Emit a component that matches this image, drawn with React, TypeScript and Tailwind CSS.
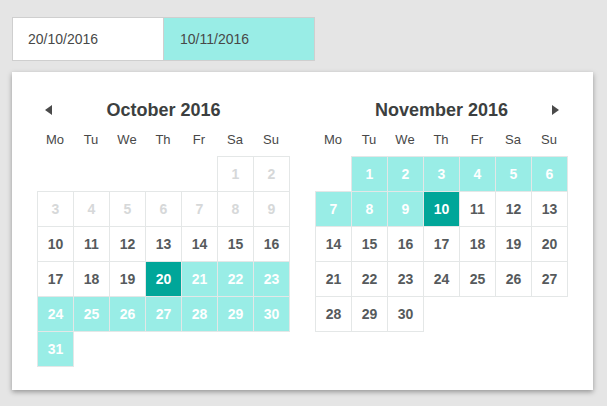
import React from "react";

type DayState = "blocked" | "default" | "span" | "selected";

type Day = {
  label: number;
  state: DayState;
} | null;

type Month = {
  title: string;
  rows: Day[][];
  arrow: "left" | "right";
};

const WEEKDAYS = ["Mo", "Tu", "We", "Th", "Fr", "Sa", "Su"];

function buildMonth(offset: number, length: number, stateOf: (d: number) => DayState): Day[][] {
  const cells: Day[] = [];
  for (let i = 0; i < offset; i++) cells.push(null);
  for (let d = 1; d <= length; d++) cells.push({ label: d, state: stateOf(d) });
  const rows: Day[][] = [];
  for (let i = 0; i < cells.length; i += 7) rows.push(cells.slice(i, i + 7));
  return rows;
}

const months: Month[] = [
  {
    title: "October 2016",
    arrow: "left",
    rows: buildMonth(5, 31, (d) => (d < 10 ? "blocked" : d < 20 ? "default" : d === 20 ? "selected" : "span")),
  },
  {
    title: "November 2016",
    arrow: "right",
    rows: buildMonth(1, 30, (d) => (d < 10 ? "span" : d === 10 ? "selected" : "default")),
  },
];

const cellStyles: Record<DayState, string> = {
  blocked: "bg-white text-[#d6d8d9]",
  default: "bg-white text-[#565a5c]",
  span: "bg-[#99ede6] text-white",
  selected: "bg-[#00a699] text-white",
};

function Arrow({ dir }: { dir: "left" | "right" }) {
  return (
    <svg width="7" height="10" viewBox="0 0 7 10" aria-hidden="true" className="fill-[#4a4a4a]">
      {dir === "left" ? <path d="M7 0 L0 5 L7 10 Z" /> : <path d="M0 0 L7 5 L0 10 Z" />}
    </svg>
  );
}

function MonthGrid({ month }: { month: Month }) {
  return (
    <div className="w-[253px]">
      <div className="flex h-[28px] items-center">
        <div className="flex w-[24px] justify-start pl-[8px]">
          {month.arrow === "left" ? <Arrow dir="left" /> : null}
        </div>
        <h2 className="flex-1 text-center text-[18px] font-bold text-[#3c3f40]">{month.title}</h2>
        <div className="flex w-[24px] justify-end pr-[9px]">
          {month.arrow === "right" ? <Arrow dir="right" /> : null}
        </div>
      </div>

      <div className="grid h-[32px] grid-cols-[repeat(7,36px)] items-center">
        {WEEKDAYS.map((w) => (
          <span key={w} className="text-center text-[13px] text-[#484848]">
            {w}
          </span>
        ))}
      </div>

      <div className="grid grid-cols-[repeat(7,36px)] auto-rows-[35px]">
        {month.rows.flat().map((day, i) =>
          day ? (
            <div
              key={i}
              className={`flex h-[36px] w-[37px] items-center justify-center border border-[#e4e7e7] text-[14px] font-bold ${cellStyles[day.state]}`}
            >
              {day.label}
            </div>
          ) : (
            <div key={i} />
          ),
        )}
      </div>
    </div>
  );
}

export default function App() {
  return (
    <div className="min-h-screen w-full bg-[#e5e5e5] pl-[12px] pt-[17px] font-['Liberation_Sans',Arial,sans-serif]">
      <div className="flex h-[44px] w-[303px] border border-[#cfcfcf] text-[14px] text-[#484848]">
        <div className="flex w-[150px] items-center bg-white pl-[15px]">20/10/2016</div>
        <div className="flex flex-1 items-center border-l border-[#cfcfcf] bg-[#99ede6] pl-[16px]">10/11/2016</div>
      </div>

      <div className="mt-[11px] flex h-[318px] w-[581px] gap-[25px] bg-white px-[25px] pt-[24px] shadow-[0_2px_5px_rgba(0,0,0,0.35)]">
        {months.map((m) => (
          <MonthGrid key={m.title} month={m} />
        ))}
      </div>
    </div>
  );
}
